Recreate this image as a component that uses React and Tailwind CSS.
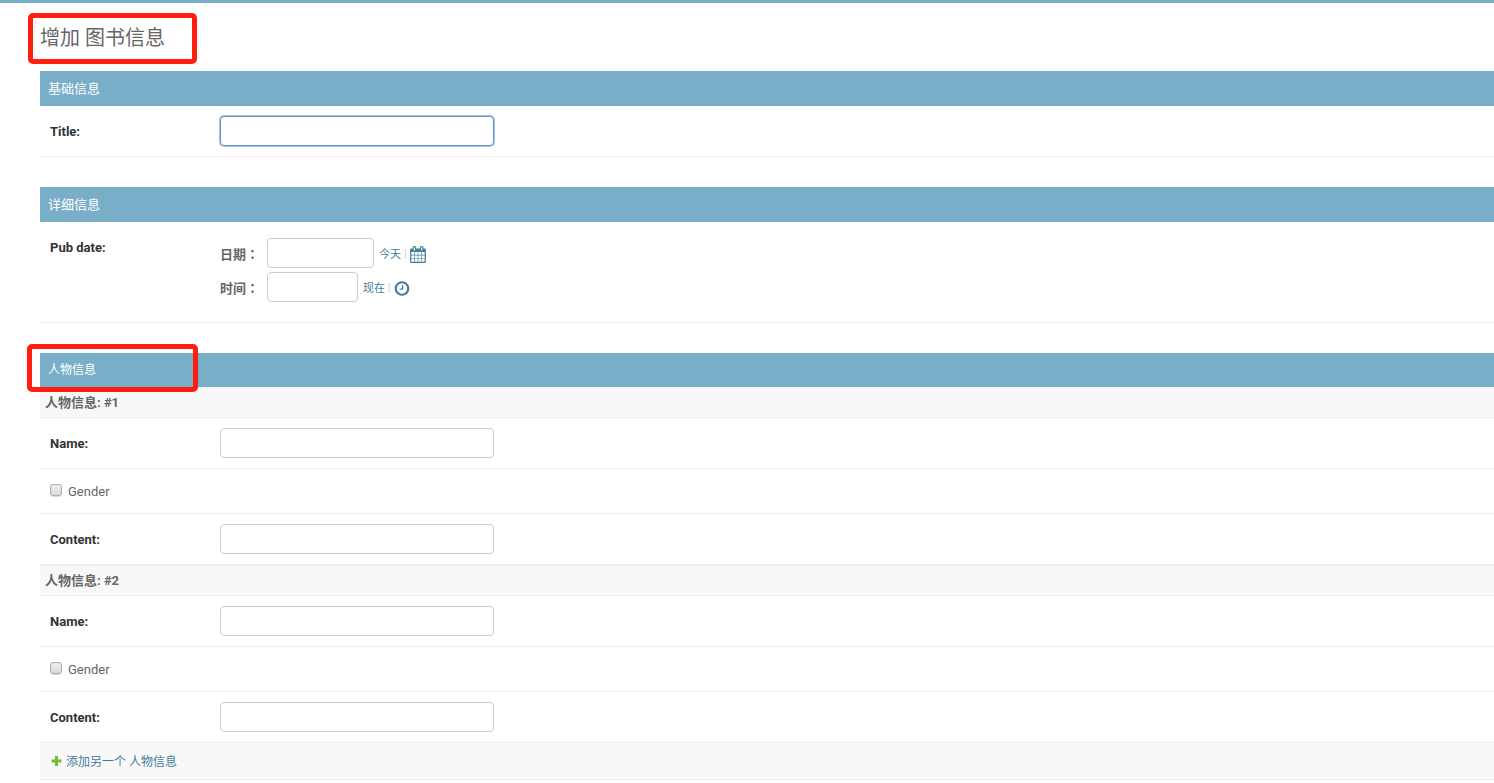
import {useState} from "react";

const rowStyle = "flex border-b border-[#eee] px-[10px]";
const inputStyle = "h-[30px] rounded border bg-white px-[6px] text-[13px] outline-none";
const linkStyle = "text-[#447e9b]";

// blue caption bar of a module
function ModuleTitle({children}) {
    return (
        <h2 className="bg-[#79aec8] px-2 h-[35px] leading-[35px] text-[13px] font-normal text-white">
            {children}
        </h2>
    );
}

// label on the left, text box on the right
function TextRow({id, label, active}) {
    const [value, setValue] = useState('');
    return (
        <div className={`${rowStyle} py-[10px] items-center`}>
            <label htmlFor={id} className="w-[170px] pt-[2px] font-bold text-[#333]">{label}:</label>
            <input
                id={id}
                type="text"
                value={value}
                onChange={e => setValue(e.target.value)}
                className={`${inputStyle} w-[274px] ${active ? 'border-[#6592c2] ring-1 ring-[#a5c7ec]' : 'border-[#ccc]'}`}
            />
        </div>
    );
}

function CheckRow({id, label}) {
    return (
        <div className={`${rowStyle} h-[45px] items-center`}>
            <input
                id={id}
                type="checkbox"
                className="mr-[6px] mb-[2px] size-3 appearance-none rounded-[3px] border border-[#a9a9a9] bg-linear-to-b from-[#eee] to-[#dcdcdc] shadow-[0_1px_0_#ddd] checked:bg-[#447e9b]"
            />
            <label htmlFor={id} className="pt-[2px]">{label}</label>
        </div>
    );
}

function CalendarIcon() {
    return (
        <svg viewBox="64 0 1664 1792" className="h-[17px] w-4" fill="currentColor" aria-hidden="true">
            <path d="M192 1664h288v-288h-288v288zm352 0h320v-288h-320v288zm-352-352h288v-320h-288v320zm352 0h320v-320h-320v320zm-352-384h288v-288h-288v288zm736 736h320v-288h-320v288zm-384-736h320v-288h-320v288zm768 736h288v-288h-288v288zm-384-352h320v-320h-320v320zm-352-864v-288q0-13-9.5-22.5t-22.5-9.5h-64q-13 0-22.5 9.5t-9.5 22.5v288q0 13 9.5 22.5t22.5 9.5h64q13 0 22.5-9.5t9.500-22.5zm736 864h288v-320h-288v320zm-384-384h320v-288h-320v288zm384 0h288v-288h-288v288zm32-480v-288q0-13-9.5-22.5t-22.5-9.5h-64q-13 0-22.5 9.5t-9.5 22.5v288q0 13 9.5 22.5t22.5 9.5h64q13 0 22.5-9.5t9.5-22.5zm384-64v1280q0 52-38 90t-90 38h-1408q-52 0-90-38t-38-90v-1280q0-52 38-90t90-38h128v-96q0-66 47-113t113-47h64q66 0 113 47t47 113v96h384v-96q0-66 47-113t113-47h64q66 0 113 47t47 113v96h128q52 0 90 38t38 90z" />
        </svg>
    );
}

function ClockIcon() {
    return (
        <svg viewBox="64 0 1664 1792" className="h-[17px] w-4" fill="currentColor" aria-hidden="true">
            <path d="M1024 544v448q0 14-9 23t-23 9h-320q-14 0-23-9t-9-23v-64q0-14 9-23t23-9h224v-352q0-14 9-23t23-9h64q14 0 23 9t9 23zm416 352q0-148-73-273t-198-198-273-73-273 73-198 198-73 273 73 273 198 198 273 73 273-73 198-198 73-273zm224 0q0 209-103 385.5t-279.5 279.5-385.5 103-385.5-103-279.5-279.5-103-385.5 103-385.5 279.5-279.5 385.5-103 385.5 103 279.5 279.5 103 385.5z" />
        </svg>
    );
}

// one line of the date/time field: text box, shortcut link, picker icon
function DateTimeLine({id, label, width, shortcut, icon}) {
    return (
        <div className="flex items-center">
            <label htmlFor={id} className="w-[47px] pt-[2px] font-['Noto_Sans_CJK_TC',sans-serif] font-bold">{label}</label>
            <input id={id} type="text" className={`${inputStyle} border-[#ccc] ${width}`} />
            <span className="ml-[5px] flex items-center gap-[3px] text-[11px] text-[#ccc]">
                <a href="#" className={`${linkStyle} pt-[3px]`}>{shortcut}</a>
                <span className="pt-[2px]">|</span>
                <a href="#" aria-label={label} className={`${linkStyle} pt-[2px]`}>{icon}</a>
            </span>
        </div>
    );
}

// one inline related person
function Person({number}) {
    return (
        <div>
            <h3 className="h-[31px] border-y border-[#eee] bg-[#f8f8f8] px-[5px] leading-[29px] text-[13px] font-bold">
                人物信息: #{number}
            </h3>
            <TextRow id={`name-${number}`} label="Name" />
            <CheckRow id={`gender-${number}`} label="Gender" />
            <TextRow id={`content-${number}`} label="Content" />
        </div>
    );
}

export default function App() {
    return (
        <div className="min-h-screen border-t-3 border-[#79aec8] bg-white font-[Roboto,'Noto_Sans_CJK_SC',sans-serif] text-[13px] leading-5 text-[#666]">
            <form className="ml-10" onSubmit={e => e.preventDefault()}>
                <div className="relative pt-5 pb-[18px]">
                    <h1 className="text-[20px] leading-[30px] font-normal">增加 图书信息</h1>
                    {/*red marker frame*/}
                    <div className="pointer-events-none absolute -left-3 top-[10px] h-[51px] w-[169px] rounded-[5px] border-5 border-[#ff1f10]" />
                </div>

                <section className="mb-[30px]">
                    <ModuleTitle>基础信息</ModuleTitle>
                    <TextRow id="title" label="Title" active />
                </section>

                <section className="mb-[30px]">
                    <ModuleTitle>详细信息</ModuleTitle>
                    <div className={`${rowStyle} pt-4 pb-5`}>
                        <span className="w-[170px] font-bold text-[#333]">Pub date:</span>
                        <div className="flex flex-col gap-1">
                            <DateTimeLine id="date" label="日期：" width="w-[107px]" shortcut="今天" icon={<CalendarIcon />} />
                            <DateTimeLine id="time" label="时间：" width="w-[91px]" shortcut="现在" icon={<ClockIcon />} />
                        </div>
                    </div>
                </section>

                <section className="relative">
                    <h2 className="h-[34px] bg-[#79aec8] px-2 text-[12px] leading-[35px] font-normal text-white">人物信息</h2>
                    <Person number={1} />
                    <Person number={2} />
                    <div className={`${rowStyle} h-[37px] items-center bg-[#f8f8f8]`}>
                        <a href="#" className={`${linkStyle} flex items-center gap-1 text-[12px]`}>
                            <svg viewBox="0 0 12 12" className="size-3" fill="#70bf2b" aria-hidden="true">
                                <path d="M5 1h3v3.500h3.500v3H8V11H5V7.500H1.500v-3H5z" />
                            </svg>
                            <span className="pt-[2px]">添加另一个 人物信息</span>
                        </a>
                    </div>
                    {/*red marker frame*/}
                    <div className="pointer-events-none absolute -left-[13px] -top-[9px] h-[48px] w-[171px] rounded-[5px] border-5 border-[#ff1f10]" />
                </section>
            </form>
        </div>
    );
}
